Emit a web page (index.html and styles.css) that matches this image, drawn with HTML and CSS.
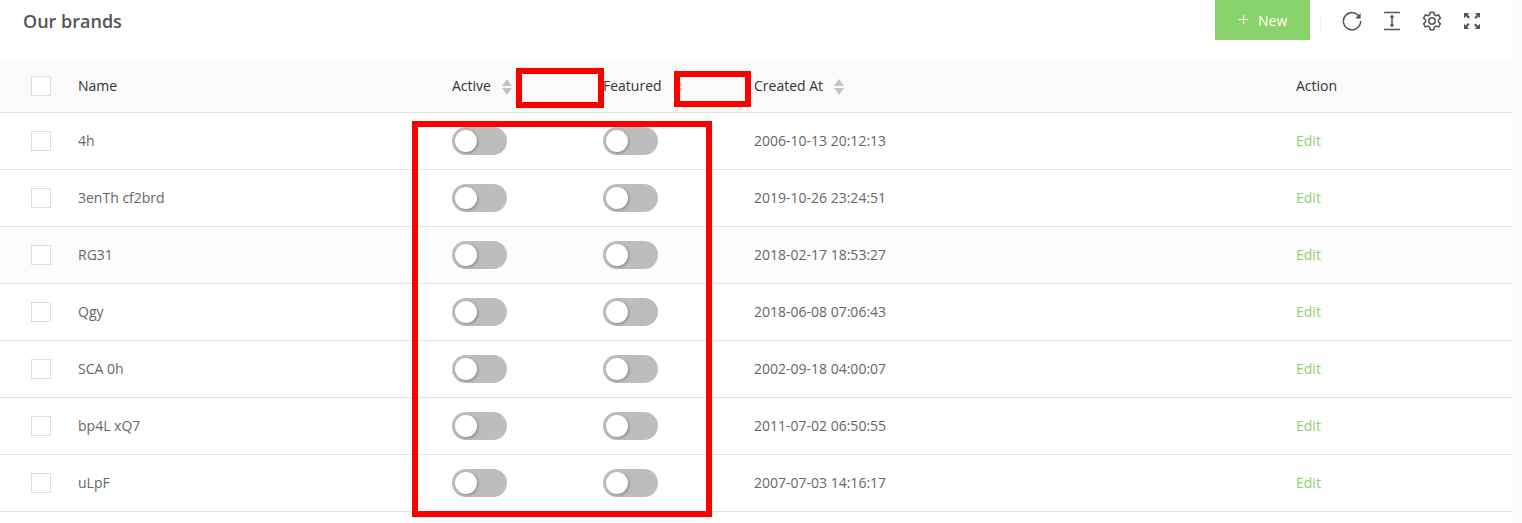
FILE: index.html
```html
<!DOCTYPE html>
<html lang="en">
<head>
    <meta charset="UTF-8" />
    <title>Our brands</title>
    <link rel="stylesheet" href="styles.css">
</head>
<body>

    <div class="panel">
        <div class="barra">
            <h1 class="titulo">Our brands</h1>
            <button class="nuevo"><span class="mas">+</span>New</button>
            <span class="separador"></span>
            <div class="iconos">
                <svg viewBox="0 0 20 20"><path d="M17.6 6.2A8.6 8.6 0 1 0 18.6 10"/><path class="relleno" d="M18.6 2.2v5.4h-5.4z"/></svg>
                <svg viewBox="0 0 20 20"><path d="M2 1.5h16M2 18.5h16"/><path d="M10 5v10"/><path class="relleno" d="M10 3.6l2.4 3h-4.8zM10 16.4l2.4-3h-4.8z"/></svg>
                <svg viewBox="0 0 20 20"><path d="M8.2 1.2h3.6l.6 2.7 1.6.9 2.6-.8 1.8 3.1-2 1.9v1.9l2 1.9-1.8 3.1-2.6-.8-1.6.9-.6 2.7H8.200l-.6-2.700-1.600-.9-2.600.8-1.800-3.100 2-1.900V9l-2-1.900 1.800-3.100 2.600.8 1.600-.9z"/><circle cx="10" cy="10" r="3.200"/></svg>
                <svg viewBox="0 0 20 20"><path class="relleno" d="M2 2h5.200L5.600 3.600 8 6 6.400 7.600 4 5.200 2 7.200zM18 2v5.200l-1.600-1.600L14 8l-1.600-1.600L14.800 4 12.800 2zM2 18v-5.200l1.600 1.600L6 12l1.600 1.600L5.200 16l2 2zM18 18h-5.200l1.600-1.600L12 14l1.600-1.600 2.400 2.400 2-2z"/></svg>
            </div>
        </div>

        <table class="tabla">
            <thead>
                <tr>
                    <th class="col-check"><span class="check"></span></th>
                    <th class="col-nombre">Name</th>
                    <th class="col-switch">Active<span class="orden"></span></th>
                    <th class="col-switch">Featured<span class="orden"></span></th>
                    <th class="col-fecha">Created At<span class="orden"></span></th>
                    <th>Action</th>
                </tr>
            </thead>
            <tbody>
                <tr>
                    <td class="col-check"><span class="check"></span></td>
                    <td>4h</td>
                    <td><span class="switch"></span></td>
                    <td><span class="switch"></span></td>
                    <td>2006-10-13 20:12:13</td>
                    <td><a class="editar" href="#">Edit</a></td>
                </tr>
                <tr>
                    <td class="col-check"><span class="check"></span></td>
                    <td>3enTh cf2brd</td>
                    <td><span class="switch"></span></td>
                    <td><span class="switch"></span></td>
                    <td>2019-10-26 23:24:51</td>
                    <td><a class="editar" href="#">Edit</a></td>
                </tr>
                <tr class="marcada">
                    <td class="col-check"><span class="check"></span></td>
                    <td>RG31</td>
                    <td><span class="switch"></span></td>
                    <td><span class="switch"></span></td>
                    <td>2018-02-17 18:53:27</td>
                    <td><a class="editar" href="#">Edit</a></td>
                </tr>
                <tr>
                    <td class="col-check"><span class="check"></span></td>
                    <td>Qgy</td>
                    <td><span class="switch"></span></td>
                    <td><span class="switch"></span></td>
                    <td>2018-06-08 07:06:43</td>
                    <td><a class="editar" href="#">Edit</a></td>
                </tr>
                <tr>
                    <td class="col-check"><span class="check"></span></td>
                    <td>SCA 0h</td>
                    <td><span class="switch"></span></td>
                    <td><span class="switch"></span></td>
                    <td>2002-09-18 04:00:07</td>
                    <td><a class="editar" href="#">Edit</a></td>
                </tr>
                <tr>
                    <td class="col-check"><span class="check"></span></td>
                    <td>bp4L xQ7</td>
                    <td><span class="switch"></span></td>
                    <td><span class="switch"></span></td>
                    <td>2011-07-02 06:50:55</td>
                    <td><a class="editar" href="#">Edit</a></td>
                </tr>
                <tr>
                    <td class="col-check"><span class="check"></span></td>
                    <td>uLpF</td>
                    <td><span class="switch"></span></td>
                    <td><span class="switch"></span></td>
                    <td>2007-07-03 14:16:17</td>
                    <td><a class="editar" href="#">Edit</a></td>
                </tr>
            </tbody>
        </table>
    </div>

    <!-- Marcas rojas dibujadas encima de la captura -->
    <div class="marca marca-active"></div>
    <div class="marca marca-featured"></div>
    <div class="marca marca-switches"></div>

</body>
</html>
```

FILE: styles.css
```css
body {
    margin: 0;
    height: 523px;
    overflow: hidden;
    background-color: #fafafa;
    font-family: "Open Sans", "Noto Sans", Arial, sans-serif;
    font-size: 14px;
    color: #666;
}

.panel {
    width: 1512px;
    height: 523px;
    background: #fff;
}

/* Barra superior */
.barra {
    display: flex;
    align-items: flex-start;
    height: 60px;
}

.titulo {
    flex: 1;
    margin: 9px 0 0 23px;
    font-size: 18px;
    line-height: 24px;
    font-weight: 600;
    color: #555;
}

.nuevo {
    display: flex;
    align-items: center;
    justify-content: center;
    width: 95px;
    height: 40px;
    padding: 0;
    border: none;
    background-color: #8ad26b;
    color: #fff;
    font-family: inherit;
    font-size: 14px;
}

.mas {
    margin-right: 9px;
    font-size: 20px;
    font-weight: 300;
    line-height: 20px;
}

.separador {
    width: 1px;
    height: 14px;
    margin: 17px 0 0 10px;
    background-color: #eee;
}

.iconos {
    display: flex;
    gap: 20px;
    margin: 11px 30px 0 21px;
}

.iconos svg {
    width: 20px;
    height: 20px;
    fill: none;
    stroke: #555;
    stroke-width: 1.5;
}

.iconos .relleno {
    fill: #555;
    stroke: none;
}

/* Tabla */
.tabla {
    width: 100%;
    table-layout: fixed;
    border-collapse: collapse;
}

.tabla th {
    height: 52px;
    padding: 0 16px;
    box-sizing: border-box;
    background-color: #fafafa;
    border-bottom: 1px solid #e2e2e2;
    text-align: left;
    font-weight: 500;
    color: #333;
}

.tabla td {
    height: 57px;
    padding: 0 16px;
    box-sizing: border-box;
    border-bottom: 1px solid #e2e2e2;
}

.tabla .marcada td {
    background-color: #fcfcfc;
}

.tabla .col-check {
    width: 62px;
    padding: 0 0 0 31px;
}

.tabla .col-nombre {
    width: 374px;
}

.tabla .col-switch {
    width: 151px;
}

.tabla .col-fecha {
    width: 542px;
}

.check {
    display: block;
    width: 18px;
    height: 18px;
    border: 1px solid #ddd;
    background: #fff;
}

.switch {
    display: block;
    position: relative;
    width: 55px;
    height: 28px;
    border-radius: 14px;
    background-color: #bdbdbd;
}

.switch::after {
    content: "";
    position: absolute;
    top: 3px;
    left: 3px;
    width: 22px;
    height: 22px;
    border-radius: 50%;
    background: #fff;
    box-shadow: 1px 1px 3px rgba(0,0,0,0.3);
}

/* Flechas de ordenar */
.orden {
    display: inline-block;
    position: relative;
    width: 11px;
    height: 16px;
    margin-left: 11px;
    vertical-align: middle;
}

.orden::before,
.orden::after {
    content: "";
    position: absolute;
    left: 0;
    border-left: 5.5px solid transparent;
    border-right: 5.5px solid transparent;
}

.orden::before {
    top: 0;
    border-bottom: 7px solid #c4c4c4;
}

.orden::after {
    bottom: 0;
    border-top: 7px solid #c4c4c4;
}

.editar {
    color: #8ad26b;
    text-decoration: none;
}

/* Marcas rojas */
.marca {
    position: absolute;
    box-sizing: border-box;
    border: 6px solid #f00;
}

.marca-active {
    left: 516px;
    top: 68px;
    width: 88px;
    height: 40px;
}

.marca-featured {
    left: 674px;
    top: 71px;
    width: 77px;
    height: 36px;
}

.marca-switches {
    left: 412px;
    top: 121px;
    width: 300px;
    height: 396px;
}
```
